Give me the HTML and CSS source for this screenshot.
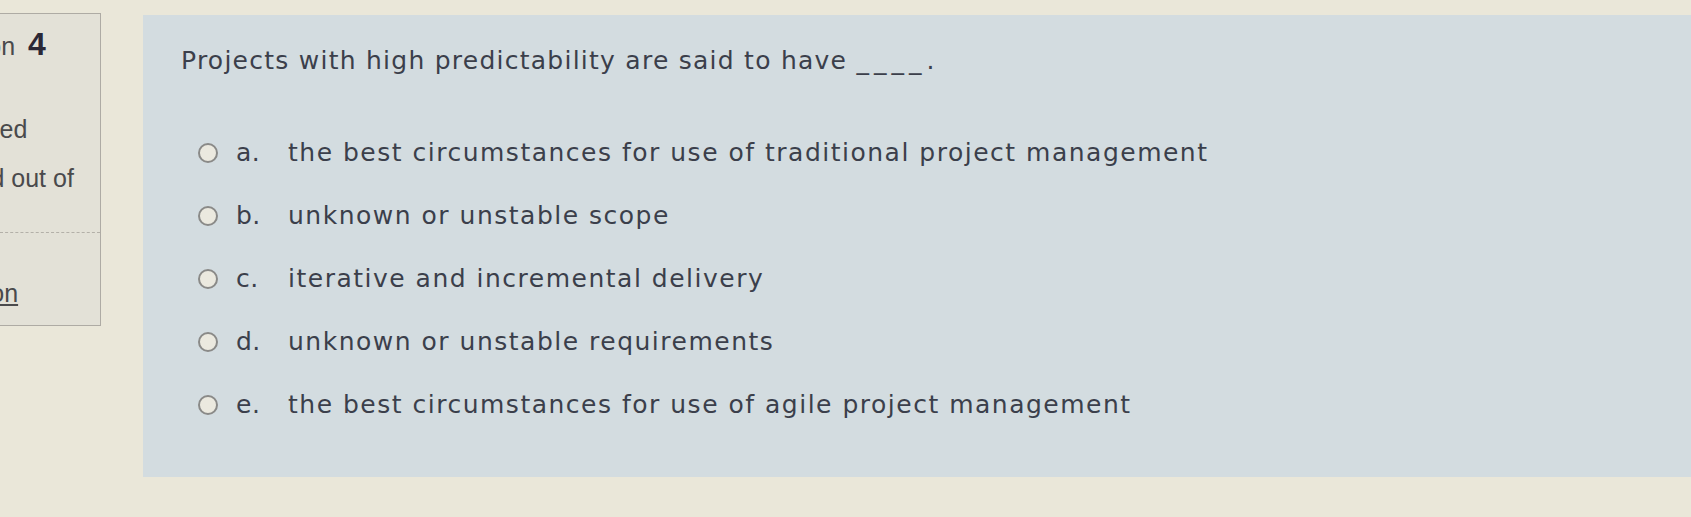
FILE: index.html
```html
<!DOCTYPE html>
<html lang="en">
<head>
<meta charset="utf-8">
<title>Question 4</title>
<link rel="stylesheet" href="styles.css">
</head>
<body>
<div class="page">
  <aside class="info">
    <h3 class="qhead">Question <span class="qno">4</span></h3>
    <div class="state">answered</div>
    <div class="grade">Marked out of</div>
    <div class="divider"></div>
    <a class="flag" href="#">Flag question</a>
  </aside>
  <main class="content">
    <p class="qtext">Projects with high predictability are said to have <span class="blank">____.</span></p>
    <div class="answers">
      <label class="opt"><span class="radio"></span><span class="letter">a.</span><span class="txt">the best circumstances for use of traditional project management</span></label>
      <label class="opt"><span class="radio"></span><span class="letter">b.</span><span class="txt">unknown or unstable scope</span></label>
      <label class="opt"><span class="radio"></span><span class="letter">c.</span><span class="txt">iterative and incremental delivery</span></label>
      <label class="opt"><span class="radio"></span><span class="letter">d.</span><span class="txt">unknown or unstable requirements</span></label>
      <label class="opt"><span class="radio"></span><span class="letter">e.</span><span class="txt">the best circumstances for use of agile project management</span></label>
    </div>
  </main>
</div>
</body>
</html>
```
FILE: styles.css
```css
html, body {
  margin: 0;
  padding: 0;
}
body {
  width: 1691px;
  height: 517px;
  overflow: hidden;
  background: #eae7d9;
  font-family: "DejaVu Sans", "Open Sans", sans-serif;
}
.page {
  display: flex;
  align-items: flex-start;
}
.info {
  margin-top: 13px;
  width: 100px;
  height: 311px;
  border: 1px solid #aeaba4;
  border-left: none;
  background: #e3e1d7;
  overflow: hidden;
  font-family: "Liberation Sans", Arial, sans-serif;
  color: #4a4a4c;
  font-size: 25px;
  white-space: nowrap;
  display: flex;
  flex-direction: column;
}
.qhead {
  margin: 15px 0 0 -85px;
  font-weight: 400;
  font-size: 25px;
  line-height: 30px;
  color: #4a4a4c;
}
.qno {
  margin-left: 6px;
  font-weight: 700;
  font-size: 32px;
  color: #2c2836;
}
.state {
  margin: 54px 0 0 -81px;
  line-height: 28px;
}
.grade {
  margin: 21px 0 0 -79px;
  line-height: 28px;
}
.divider {
  margin: 40px 0 0 0;
  border-top: 1px dashed #b3b0a8;
  width: 100%;
}
.flag {
  margin: 46px 0 0 -132px;
  line-height: 28px;
  color: #4a4a4c;
  text-decoration: underline;
}
.content {
  flex: 1;
  margin: 15px 0 0 42px;
  height: 462px;
  background: #d3dce0;
  color: #3b3f4b;
  box-sizing: border-box;
  padding: 31px 0 0 38px;
}
.qtext {
  margin: 0;
  font-size: 25px;
  line-height: 30px;
  letter-spacing: 1.25px;
}
.blank {
  margin-left: 0;
  letter-spacing: 5px;
}
.answers {
  display: flex;
  flex-direction: column;
  margin: 62px 0 0 17px;
  gap: 33px;
}
.opt {
  display: flex;
  align-items: center;
  font-size: 25px;
  line-height: 30px;
  letter-spacing: 1.5px;
}
.radio {
  width: 16px;
  height: 16px;
  border: 2px solid #8a8a88;
  border-radius: 50%;
  background: #ebe9df;
  flex: none;
}
.letter {
  margin-left: 18px;
  width: 52px;
  flex: none;
  letter-spacing: 0.5px;
}
```
